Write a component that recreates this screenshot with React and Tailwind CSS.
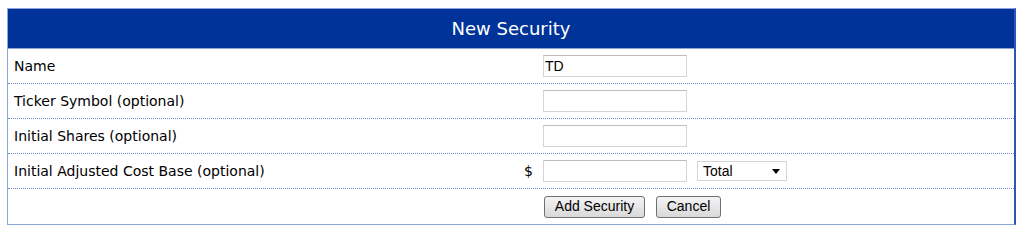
import React from "react";

function Input({ value }) {
  return (
    <div
      className="w-[144px] h-[22px] border border-[#d4d4d4] border-t-[#bdbdbd] bg-white flex items-center pl-[1px] text-[14px] text-black font-['Liberation_Sans',Arial,sans-serif]"
    >
      {value}
    </div>
  );
}

function Row({ label, children, dollar, last }) {
  return (
    <div
      className={
        "h-[35px] flex items-center " +
        (last ? "" : "border-b border-dotted border-[#6f8bd6]")
      }
    >
      <div className="w-[510px] pl-[6px] text-[14px] text-black font-['DejaVu_Sans',sans-serif]">
        {label}
      </div>
      <div className="w-[25px] pr-[10px] text-right text-[14px] text-black font-['DejaVu_Sans',sans-serif]">
        {dollar ? "$" : ""}
      </div>
      {children}
    </div>
  );
}

function Button({ children, w }) {
  return (
    <div
      className={
        "h-[22px] flex items-center justify-center rounded-[3px] border border-[#707070] bg-gradient-to-b from-[#f4f4f4] to-[#d9d9d9] text-[14px] text-black font-['Liberation_Sans',Arial,sans-serif] " +
        w
      }
    >
      {children}
    </div>
  );
}

export default function App() {
  return (
    <div className="w-[1024px] h-[233px] bg-white pt-[8px] pl-[7px]">
      <div className="w-[1009px] border-l border-t border-b border-[#8ea3da] border-r-2 border-r-[#2d54b8]">
        <div className="h-[40px] bg-[#003399] border-b border-[#8ea3da] flex items-center justify-center text-white text-[18px] font-['DejaVu_Sans',sans-serif]">
          New Security
        </div>
        <Row label="Name">
          <Input value="TD" />
        </Row>
        <Row label="Ticker Symbol (optional)">
          <Input value="" />
        </Row>
        <Row label="Initial Shares (optional)">
          <Input value="" />
        </Row>
        <Row label="Initial Adjusted Cost Base (optional)" dollar>
          <Input value="" />
          <div className="ml-[10px] w-[90px] h-[20px] border border-[#d4d4d4] bg-white flex items-center justify-between pl-[5px] pr-[6px] text-[14px] text-black font-['Liberation_Sans',Arial,sans-serif]">
            <span>Total</span>
            <svg width="8" height="5" viewBox="0 0 8 5">
              <path d="M0 0 L8 0 L4 5 Z" fill="#000" />
            </svg>
          </div>
        </Row>
        <Row label="" last>
          <div className="flex items-center gap-[11px] ml-[1px]">
            <Button w="w-[101px]">Add Security</Button>
            <Button w="w-[65px]">Cancel</Button>
          </div>
        </Row>
      </div>
    </div>
  );
}
